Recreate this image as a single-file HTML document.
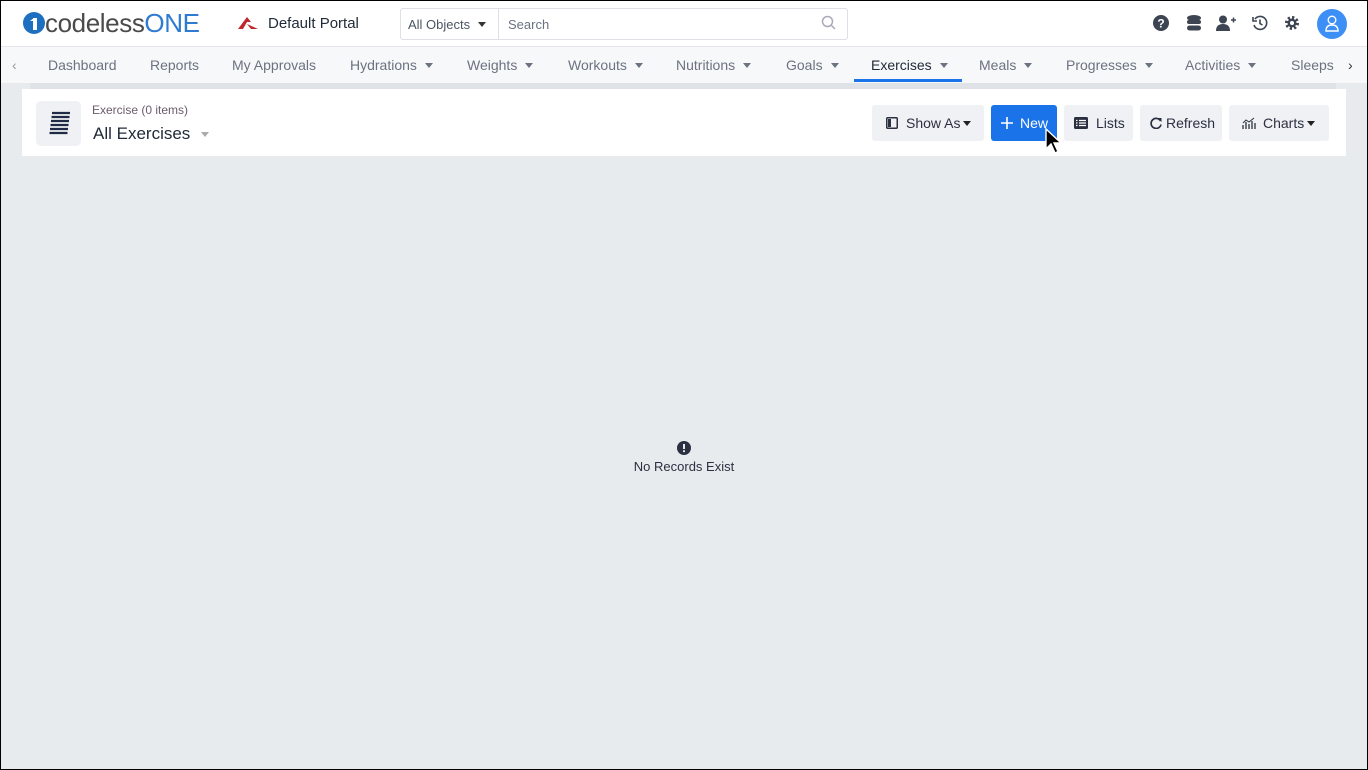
<!DOCTYPE html>
<html><head><style>
*{box-sizing:border-box;margin:0;padding:0}
body{width:1368px;height:770px;overflow:hidden;font-family:"Liberation Sans",sans-serif;background:#e8ebee;position:relative}
.frame{position:absolute;left:0;top:0;width:1368px;height:770px;border:1px solid #000;pointer-events:none;z-index:10}
.top{position:absolute;left:0;top:0;width:1368px;height:47px;background:#fff;border-bottom:1px solid #e4e6ea}
.nav{position:absolute;left:0;top:47px;width:1368px;height:36px;background:#f7f8fa}
.nav span{position:absolute;top:10px;font-size:14px;color:#6b7280}
.car{display:inline-block;width:0;height:0;border-left:4px solid transparent;border-right:4px solid transparent;border-top:5px solid #6b7280;margin-left:8px;vertical-align:2px}
.strip{position:absolute;left:30px;top:83px;width:1306px;height:6px;background:#dfe2e6}
.card{position:absolute;left:22px;top:89px;width:1324px;height:67px;background:#fff}
.btn{position:absolute;top:16px;height:36px;background:#f0f1f4;border-radius:3px;font-size:14px;color:#2b3040;line-height:36px;padding-left:34px}
</style></head><body>
<div class="frame"></div>
<div class="top">
 <svg style="position:absolute;left:23px;top:12px" width="22" height="22"><circle cx="11" cy="11" r="11" fill="#1e6fbf"/><rect x="10" y="6" width="4" height="12" fill="#fff"/><path d="M7 9 L11 6 L12 9 Z" fill="#fff"/></svg>
 <div style="position:absolute;left:45px;top:8px;font-size:26px;color:#4a4a4a;letter-spacing:-0.4px">codeless<span style="color:#2f7bd1">ONE</span></div>
 <svg style="position:absolute;left:238px;top:16px" width="22" height="14"><path d="M0 13 L9 1 L13 6 L9 6 L5 13 Z M9 8 L20 13 L13 13 Z" fill="#c0262d"/></svg>
 <div style="position:absolute;left:268px;top:15px;font-size:15px;color:#1f2937">Default Portal</div>
 <div style="position:absolute;left:400px;top:8px;width:448px;height:32px;border:1px solid #dde0e4;border-radius:3px">
  <div style="position:absolute;left:7px;top:8px;font-size:13px;color:#4b5563">All Objects <span class="car" style="border-top-color:#333;margin-left:4px"></span></div>
  <div style="position:absolute;left:97px;top:0;height:30px;border-left:1px solid #dde0e4"></div>
  <div style="position:absolute;left:107px;top:8px;font-size:13px;color:#6b7280">Search</div>
  <svg style="position:absolute;left:420px;top:6px" width="16" height="16"><circle cx="6.5" cy="6.5" r="5" stroke="#aab" stroke-width="1.5" fill="none"/><path d="M10 10 L14 14" stroke="#aab" stroke-width="1.5"/></svg>
 </div>
 <svg style="position:absolute;left:1153px;top:15px" width="16" height="16"><circle cx="8" cy="8" r="8" fill="#3d4452"/><text x="8" y="12.5" font-size="12" font-weight="bold" fill="#fff" text-anchor="middle" font-family="Liberation Sans">?</text></svg>
 <svg style="position:absolute;left:1187px;top:15px" width="14" height="16"><ellipse cx="7" cy="3" rx="7" ry="3" fill="#3d4452"/><rect x="0" y="5" width="14" height="4" rx="2" fill="#3d4452"/><rect x="0" y="10.5" width="14" height="5" rx="2.5" fill="#3d4452"/></svg>
 <svg style="position:absolute;left:1216px;top:15px" width="20" height="16"><circle cx="7" cy="4.5" r="4" fill="#3d4452"/><path d="M0 16 Q0 9 7 9 Q14 9 14 16Z" fill="#3d4452"/><path d="M15 5h5M17.5 2.5v5" stroke="#3d4452" stroke-width="1.5"/></svg>
 <svg style="position:absolute;left:1252px;top:15px" width="16" height="16"><path d="M3 4 A6.5 6.5 0 1 1 2 10" stroke="#3d4452" stroke-width="1.6" fill="none"/><path d="M1 2 L1 6 L5 6" stroke="#3d4452" stroke-width="1.6" fill="none"/><path d="M8 4.5V8.5L10.5 10" stroke="#3d4452" stroke-width="1.6" fill="none"/></svg>
 <svg style="position:absolute;left:1284px;top:15px" width="16" height="16"><circle cx="8" cy="8" r="5.5" fill="none" stroke="#3d4452" stroke-width="3" stroke-dasharray="2.2 2.1"/><circle cx="8" cy="8" r="4.5" fill="#3d4452"/><circle cx="8" cy="8" r="2" fill="#fff"/></svg>
 <div style="position:absolute;left:1317px;top:9px;width:30px;height:30px;border-radius:50%;background:#3d8ef5"></div>
 <svg style="position:absolute;left:1324px;top:15px" width="16" height="18"><circle cx="8" cy="5" r="3.8" stroke="#fff" stroke-width="1.4" fill="none"/><path d="M2 16 Q2 10 8 10 Q14 10 14 16Z" stroke="#fff" stroke-width="1.4" fill="none"/></svg>
</div>
<div class="nav">
 <span style="left:12px;color:#999">‹</span>
 <span style="left:48px">Dashboard</span>
 <span style="left:150px">Reports</span>
 <span style="left:232px">My Approvals</span>
 <span style="left:350px">Hydrations<i class="car"></i></span>
 <span style="left:467px">Weights<i class="car"></i></span>
 <span style="left:568px">Workouts<i class="car"></i></span>
 <span style="left:676px">Nutritions<i class="car"></i></span>
 <span style="left:786px">Goals<i class="car"></i></span>
 <span style="left:871px;color:#1f2937">Exercises<i class="car"></i></span>
 <div style="position:absolute;left:854px;top:32px;width:108px;height:3px;background:#1a73e8"></div>
 <span style="left:979px">Meals<i class="car"></i></span>
 <span style="left:1066px">Progresses<i class="car"></i></span>
 <span style="left:1185px">Activities<i class="car"></i></span>
 <span style="left:1291px">Sleeps</span>
 <span style="left:1348px;color:#333">›</span>
</div>
<div class="strip"></div>
<div class="card">
 <div style="position:absolute;left:14px;top:12px;width:45px;height:45px;background:#f0f1f4;border-radius:5px"></div>
 <svg style="position:absolute;left:26px;top:22px" width="24" height="26"><g stroke="#1f2a44" stroke-width="2.2"><path d="M4 2h18M3.5 6h18M3 10h18M2.5 14h18M2 18h18M1.5 22h18"/></g></svg>
 <div style="position:absolute;left:70px;top:14px;font-size:12px;color:#6b5b6b">Exercise (0 items)</div>
 <div style="position:absolute;left:71px;top:35px;font-size:17px;color:#1f2937">All Exercises <span class="car" style="border-top-color:#aaa;margin-left:6px"></span></div>
 <div class="btn" style="left:850px;width:112px">Show As<span class="car" style="border-top-color:#222;margin-left:3px"></span>
  <svg style="position:absolute;left:14px;top:12px" width="12" height="12"><rect x="0.75" y="0.75" width="10.5" height="10.5" rx="1" fill="none" stroke="#2b3040" stroke-width="1.5"/><rect x="2" y="2" width="3" height="8" fill="#2b3040"/></svg></div>
 <div class="btn" style="left:969px;width:66px;background:#1a73e8;color:#fff;padding-left:29px">New
  <svg style="position:absolute;left:10px;top:12px" width="12" height="12"><path d="M6 0v12M0 6h12" stroke="#fff" stroke-width="1.6"/></svg></div>
 <div class="btn" style="left:1042px;width:69px;padding-left:32px">Lists
  <svg style="position:absolute;left:10px;top:12px" width="14" height="12"><rect width="14" height="12" rx="1.5" fill="#2b3040"/><path d="M2 3.5h1.5M5 3.5h7M2 6h1.5M5 6h7M2 8.5h1.5M5 8.5h7" stroke="#fff" stroke-width="1.2"/></svg></div>
 <div class="btn" style="left:1118px;width:82px;padding-left:26px">Refresh
  <svg style="position:absolute;left:10px;top:12px" width="12" height="12"><path d="M10.5 4 A5 5 0 1 0 11 7.5" stroke="#2b3040" stroke-width="1.7" fill="none"/><path d="M7.5 1 L11.5 1 L11.5 5Z" fill="#2b3040"/></svg></div>
 <div class="btn" style="left:1207px;width:100px">Charts<span class="car" style="border-top-color:#222;margin-left:3px"></span>
  <svg style="position:absolute;left:13px;top:12px" width="14" height="12"><path d="M1 12V8M4 12V5M7 12V7M10 12V4M13 12V6" stroke="#2b3040" stroke-width="1.3"/><path d="M1 6L4 3L7 5L12 1" stroke="#2b3040" stroke-width="1" fill="none"/></svg></div>
</div>
<svg style="position:absolute;left:1042px;top:127px" width="22" height="32"><path d="M4 2 L4 22 L9 17 L13 26 L16 24.5 L12 16 L19 16 Z" fill="#000" stroke="#fff" stroke-width="1.4"/></svg>
<svg style="position:absolute;left:677px;top:441px" width="14" height="14"><circle cx="7" cy="7" r="7" fill="#2b3040"/><rect x="6.1" y="3" width="1.8" height="5" fill="#fff"/><rect x="6.1" y="9.3" width="1.8" height="1.8" fill="#fff"/></svg>
<div style="position:absolute;left:0;width:1368px;top:459px;text-align:center;font-size:13px;color:#2b3040">No Records Exist</div>
</body></html>
